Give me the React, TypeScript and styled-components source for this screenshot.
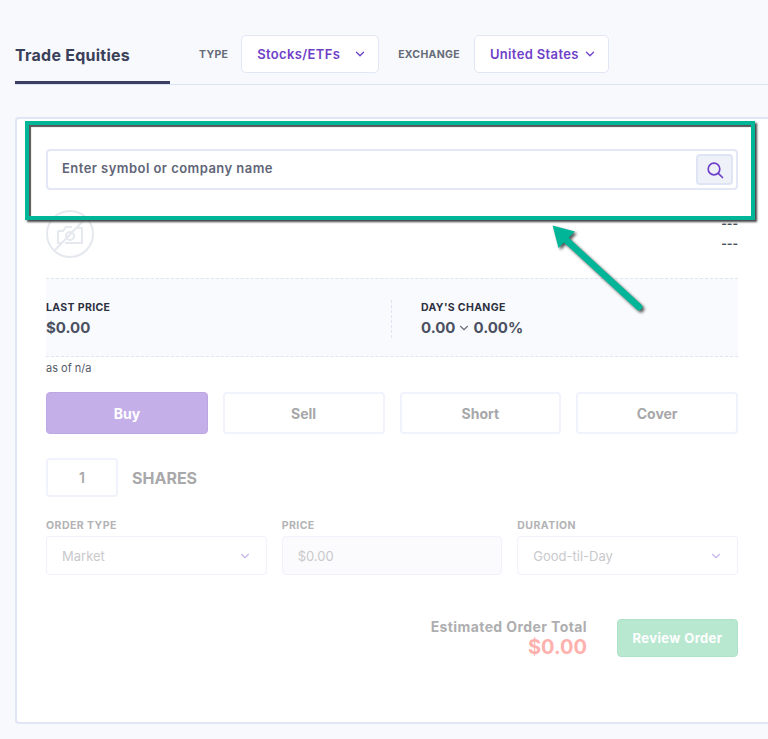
import React from 'react'
import styled, {createGlobalStyle} from 'styled-components'
import {ChevronDown} from 'lucide-react'

const GlobalStyle = createGlobalStyle`
  html, body {
    margin: 0;
    padding: 0;
    height: 739px;
    overflow: hidden;
    background: #f7f9fc;
    font-family: Inter, "Open Sans", "Liberation Sans", sans-serif;
  }
`

const Page = styled.div`
  position: relative;
  width: 768px;
  height: 739px;
  overflow: hidden;
  padding-left: 15px;
  box-sizing: border-box;
`

const Header = styled.div`
  display: flex;
  align-items: flex-start;
  height: 85px;
  box-sizing: border-box;
  border-bottom: 1px solid #dbe4f3;
`

const TabTitle = styled.div`
  width: 155px;
  height: 84px;
  box-sizing: border-box;
  padding-top: 45px;
  border-bottom: 3px solid #3a3f63;
  font-size: 16px;
  line-height: 20px;
  font-weight: 700;
  letter-spacing: 0.25px;
  color: #3a4059;
`

const Filters = styled.div`
  display: flex;
  align-items: center;
  height: 38px;
  margin-top: 35px;
  margin-left: 29px;
`

const FilterLabel = styled.span<{$gap: number}>`
  font-size: 10.5px;
  font-weight: 700;
  letter-spacing: 0.3px;
  color: #666b78;
  margin-right: ${(p) => p.$gap}px;
`

const FilterSelect = styled.div<{$width: number; $gap: number}>`
  display: flex;
  align-items: center;
  justify-content: space-between;
  width: ${(p) => p.$width}px;
  height: 38px;
  box-sizing: border-box;
  margin-right: ${(p) => p.$gap}px;
  padding: 0 11px 0 15px;
  background: #fff;
  border: 1px solid #e1e7f5;
  border-radius: 5px;
  font-size: 13px;
  font-weight: 600;
  letter-spacing: 0.35px;
  color: #6f3fc8;
  svg {
    color: #6f3fc8;
  }
`

const Card = styled.div`
  height: 607px;
  margin-top: 32px;
  box-sizing: border-box;
  padding: 30px 30px 0 29px;
  background: #fff;
  border: 2px solid #e0e6f6;
  border-right: none;
  border-radius: 4px 0 0 4px;
`

const SearchBox = styled.div`
  display: flex;
  align-items: center;
  justify-content: space-between;
  height: 41px;
  box-sizing: border-box;
  padding: 0 3px 0 14px;
  border: 2px solid #e3e7f6;
  border-radius: 4px;
  font-size: 13px;
  line-height: 15px;
  font-weight: 600;
  letter-spacing: 0.45px;
  color: #5f6577;
`

const SearchHint = styled.span`
  margin-bottom: 2px;
`

const SearchButton = styled.div`
  display: flex;
  align-items: center;
  justify-content: center;
  width: 37px;
  height: 31px;
  box-sizing: border-box;
  background: #eef1f8;
  border: 2px solid #e0e5f5;
  border-radius: 4px;
  color: #6f3fc8;
`

const SymbolRow = styled.div`
  display: flex;
  justify-content: space-between;
  height: 48px;
  margin-top: 20px;
`

const SymbolMeta = styled.div`
  display: flex;
  flex-direction: column;
  align-items: flex-end;
  padding-top: 4px;
  font-size: 12px;
  line-height: 20px;
  font-weight: 700;
  color: #4a4f60;
`

const QuoteBand = styled.div`
  display: flex;
  height: 79px;
  margin-top: 20px;
  box-sizing: border-box;
  background: #f9fafd;
  border-top: 1px dashed #dfe4f3;
  border-bottom: 1px dashed #dfe4f3;
`

const QuoteCell = styled.div<{$divided?: boolean}>`
  display: flex;
  flex-direction: column;
  justify-content: center;
  height: 38px;
  margin-top: 21px;
  box-sizing: border-box;
  width: ${(p) => (p.$divided ? 347 : 345)}px;
  padding-left: ${(p) => (p.$divided ? 29 : 0)}px;
  border-left: ${(p) => (p.$divided ? '1px dashed #dfe4f3' : 'none')};
`

const QuoteLabel = styled.div`
  font-size: 10.5px;
  line-height: 15px;
  font-weight: 700;
  letter-spacing: 0.35px;
  color: #2d3040;
`

const QuoteValue = styled.div`
  display: flex;
  align-items: center;
  gap: 2px;
  margin-top: 2px;
  font-size: 15px;
  line-height: 21px;
  font-weight: 700;
  color: #4b5061;
  svg {
    color: #6b7080;
  }
`

const AsOf = styled.div`
  margin-top: 2px;
  height: 18px;
  font-size: 11px;
  line-height: 18px;
  color: #555a68;
`

const Sides = styled.div`
  display: grid;
  grid-template-columns: repeat(4, 1fr);
  gap: 15px;
  margin-top: 15px;
`

const SideButton = styled.div<{$active?: boolean}>`
  display: flex;
  align-items: center;
  justify-content: center;
  height: 42px;
  box-sizing: border-box;
  background: ${(p) => (p.$active ? '#c5afe8' : '#fff')};
  border: ${(p) => (p.$active ? '1px solid #bda6e4' : '2px solid #f0f3fb')};
  border-radius: 4px;
  font-size: 14px;
  font-weight: 700;
  color: ${(p) => (p.$active ? '#fff' : '#a7a7a9')};
`

const QuantityRow = styled.div`
  display: flex;
  align-items: center;
  gap: 14px;
  margin-top: 24px;
`

const Quantity = styled.div`
  display: flex;
  align-items: center;
  justify-content: center;
  width: 72px;
  height: 39px;
  box-sizing: border-box;
  border: 2px solid #f0f3fb;
  border-radius: 4px;
  font-size: 14px;
  font-weight: 600;
  color: #a7a7a9;
`

const Unit = styled.span`
  font-size: 16px;
  font-weight: 700;
  color: #a9a9ab;
`

const OrderFields = styled.div`
  display: grid;
  grid-template-columns: repeat(3, 1fr);
  gap: 15px;
  margin-top: 20px;
`

const Field = styled.div`
  display: flex;
  flex-direction: column;
`

const FieldLabel = styled.div`
  height: 19px;
  font-size: 10.5px;
  line-height: 18px;
  font-weight: 700;
  letter-spacing: 0.45px;
  color: #b3b3b5;
`

const FieldBox = styled.div<{$disabled?: boolean}>`
  display: flex;
  align-items: center;
  justify-content: space-between;
  height: 39px;
  box-sizing: border-box;
  padding: 0 14px 0 15px;
  background: ${(p) => (p.$disabled ? '#fbfbfd' : '#fff')};
  border: 1px solid #f0f1fb;
  border-radius: 4px;
  font-size: 13px;
  color: #c9c9cc;
  svg {
    color: #c9b6ec;
  }
`

const Summary = styled.div`
  display: flex;
  justify-content: flex-end;
  align-items: flex-start;
  gap: 30px;
  margin-top: 44px;
`

const Total = styled.div`
  display: flex;
  flex-direction: column;
  align-items: flex-end;
`

const TotalLabel = styled.div`
  font-size: 14px;
  line-height: 15px;
  font-weight: 700;
  letter-spacing: 0.4px;
  color: #aeaeb0;
`

const TotalValue = styled.div`
  font-size: 20px;
  line-height: 27px;
  font-weight: 700;
  color: #ffb1ae;
`

const ReviewButton = styled.div`
  display: flex;
  align-items: center;
  justify-content: center;
  width: 121px;
  height: 38px;
  box-sizing: border-box;
  background: #b9e8d1;
  border: 1px solid #aee2c8;
  border-radius: 4px;
  font-size: 13px;
  font-weight: 700;
  letter-spacing: 0.4px;
  color: #fff;
`

const Highlight = styled.div`
  position: absolute;
  left: 25px;
  top: 121px;
  width: 730px;
  height: 99px;
  box-sizing: border-box;
  border: 4px solid #00b598;
  box-shadow: 2px 2px 2px #444, inset 2px 2px 1px #555;
  pointer-events: none;
`

const Arrow = styled.svg`
  position: absolute;
  left: 540px;
  top: 215px;
  overflow: visible;
  filter: drop-shadow(2px 2px 1.5px rgba(40, 40, 40, 0.8));
`

const NoImage = () => (
  <svg width="48" height="48" viewBox="0 0 48 48" fill="none" stroke="#e5e8ee" strokeWidth="2">
    <circle cx="24" cy="24" r="23" />
    <path d="M12 21h5l3-4h6M30 18h6v15H19M12 21v12h3" />
    <circle cx="24" cy="26" r="4" />
    <path d="M9 40L39 9" />
  </svg>
)

const App = () => (
  <Page>
    <GlobalStyle />
    <Header>
      <TabTitle>Trade Equities</TabTitle>
      <Filters>
        <FilterLabel $gap={13}>TYPE</FilterLabel>
        <FilterSelect $width={138} $gap={19}>
          Stocks/ETFs
          <ChevronDown size={14} strokeWidth={2.2} />
        </FilterSelect>
        <FilterLabel $gap={14}>EXCHANGE</FilterLabel>
        <FilterSelect $width={135} $gap={0}>
          United States
          <ChevronDown size={14} strokeWidth={2.2} />
        </FilterSelect>
      </Filters>
    </Header>
    <Card>
      <SearchBox>
        <SearchHint>Enter symbol or company name</SearchHint>
        <SearchButton>
          <svg width="18" height="18" viewBox="0 0 18 18" fill="none" stroke="currentColor" strokeWidth="1.7" strokeLinecap="round">
            <circle cx="8" cy="8" r="5.8" />
            <path d="M12.3 12.3L16.5 16.5" />
          </svg>
        </SearchButton>
      </SearchBox>
      <SymbolRow>
        <NoImage />
        <SymbolMeta>
          <span>---</span>
          <span>---</span>
        </SymbolMeta>
      </SymbolRow>
      <QuoteBand>
        <QuoteCell>
          <QuoteLabel>LAST PRICE</QuoteLabel>
          <QuoteValue>$0.00</QuoteValue>
        </QuoteCell>
        <QuoteCell $divided>
          <QuoteLabel>DAY'S CHANGE</QuoteLabel>
          <QuoteValue>
            0.00
            <ChevronDown size={14} strokeWidth={2} />
            0.00%
          </QuoteValue>
        </QuoteCell>
      </QuoteBand>
      <AsOf>as of n/a</AsOf>
      <Sides>
        <SideButton $active>Buy</SideButton>
        <SideButton>Sell</SideButton>
        <SideButton>Short</SideButton>
        <SideButton>Cover</SideButton>
      </Sides>
      <QuantityRow>
        <Quantity>1</Quantity>
        <Unit>SHARES</Unit>
      </QuantityRow>
      <OrderFields>
        <Field>
          <FieldLabel>ORDER TYPE</FieldLabel>
          <FieldBox>
            Market
            <ChevronDown size={14} strokeWidth={2} />
          </FieldBox>
        </Field>
        <Field>
          <FieldLabel>PRICE</FieldLabel>
          <FieldBox $disabled>$0.00</FieldBox>
        </Field>
        <Field>
          <FieldLabel>DURATION</FieldLabel>
          <FieldBox>
            Good-til-Day
            <ChevronDown size={14} strokeWidth={2} />
          </FieldBox>
        </Field>
      </OrderFields>
      <Summary>
        <Total>
          <TotalLabel>Estimated Order Total</TotalLabel>
          <TotalValue>$0.00</TotalValue>
        </Total>
        <ReviewButton>Review Order</ReviewButton>
      </Summary>
    </Card>
    <Highlight />
    <Arrow width="110" height="100" viewBox="0 0 110 100" fill="none">
      <path d="M99 92L24 23" stroke="#00b598" strokeWidth="6.5" strokeLinecap="round" />
      <path d="M14 12L33 17L19 31Z" fill="#00b598" stroke="#00b598" strokeWidth="2" />
    </Arrow>
  </Page>
)

export default App
